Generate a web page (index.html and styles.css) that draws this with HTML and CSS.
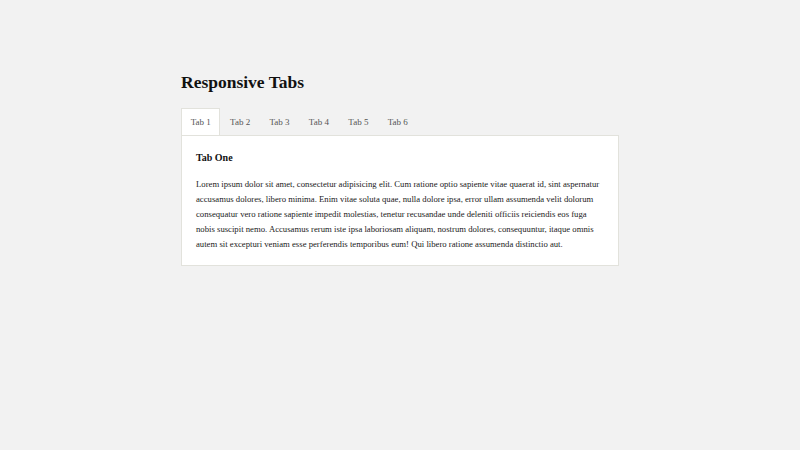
FILE: index.html
```html
<!DOCTYPE html>
<html lang="en">

<head>
    <meta charset="UTF-8">
    <meta name="viewport" content="width=device-width, initial-scale=1.0">
    <title>Responsive Tabs</title>
    <link rel="stylesheet" href="styles.css">
</head>

<body>
    <div class="wrapper">
        <h1>Responsive Tabs</h1>
        <ul class="tabs">
            <li class="tab active">Tab 1</li>
            <li class="tab">Tab 2</li>
            <li class="tab">Tab 3</li>
            <li class="tab">Tab 4</li>
            <li class="tab">Tab 5</li>
            <li class="tab">Tab 6</li>
        </ul>
        <div class="tab-content">
            <h2>Tab One</h2>
            <p>Lorem ipsum dolor sit amet, consectetur adipisicing elit. Cum ratione optio sapiente vitae quaerat id, sint aspernatur accusamus dolores, libero minima. Enim vitae soluta quae, nulla dolore ipsa, error ullam assumenda velit dolorum consequatur vero ratione sapiente impedit molestias, tenetur recusandae unde deleniti officiis reiciendis eos fuga nobis suscipit nemo. Accusamus rerum iste ipsa laboriosam aliquam, nostrum dolores, consequuntur, itaque omnis autem sit excepturi veniam esse perferendis temporibus eum! Qui libero ratione assumenda distinctio aut.</p>
        </div>
    </div>
</body>

</html>
```

FILE: styles.css
```css
body {
    font-family: 'Liberation Serif', 'Times New Roman', serif;
    background-color: #f2f2f2;
    color: #222;
    margin: 0;
    padding: 0;
}

.wrapper {
    width: 438px;
    margin: 0 auto;
    padding-top: 72px;
}

h1 {
    font-size: 17.5px;
    line-height: 20px;
    margin: 0 0 16px;
    color: #111;
}

.tabs {
    list-style: none;
    margin: 0;
    padding: 0;
    display: flex;
}

.tab {
    font-size: 9px;
    color: #555;
    padding: 0 8.65px;
    height: 26px;
    line-height: 26px;
    border: 1px solid transparent;
    border-bottom: none;
    cursor: pointer;
}

.tab.active {
    background-color: #fff;
    border-color: #e2e2dc;
    position: relative;
    top: 1px;
    margin-top: -1px;
}

.tab-content {
    background-color: #fff;
    border: 1px solid #e2e2dc;
    padding: 15px 14px 13px;
}

.tab-content h2 {
    font-size: 10px;
    line-height: 14px;
    margin: 0 0 12px;
    color: #111;
}

.tab-content p {
    font-size: 8.7px;
    line-height: 15px;
    margin: 0;
}
```
